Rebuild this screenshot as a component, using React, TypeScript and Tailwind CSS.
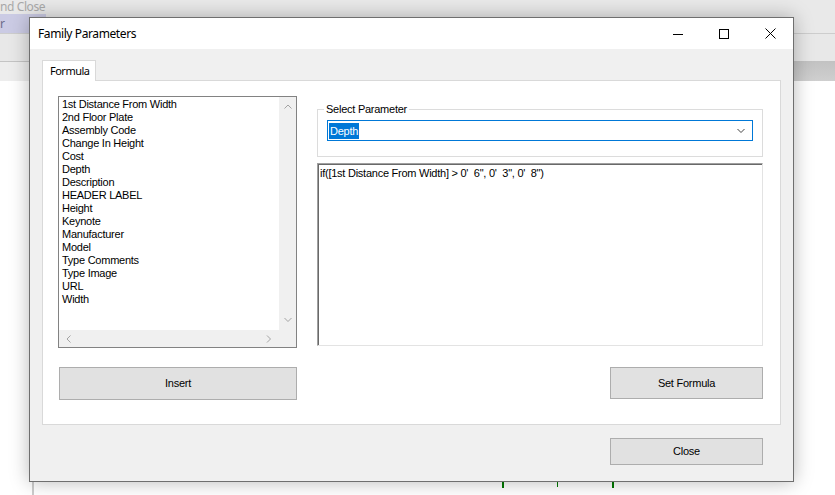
const items = [
  '1st Distance From Width',
  '2nd Floor Plate',
  'Assembly Code',
  'Change In Height',
  'Cost',
  'Depth',
  'Description',
  'HEADER LABEL',
  'Height',
  'Keynote',
  'Manufacturer',
  'Model',
  'Type Comments',
  'Type Image',
  'URL',
  'Width',
];

const ui = "font-['Noto_Sans',sans-serif] tracking-[-0.4px]";
const ms = "font-['Liberation_Sans',Arial,sans-serif] text-[11px] tracking-[-0.25px]";

function Chevron({ dir, className }: { dir: 'up' | 'down' | 'left' | 'right'; className?: string }) {
  const d = {
    up: 'M0.5 4.5 L4 1 L7.5 4.5',
    down: 'M0.5 1 L4 4.5 L7.5 1',
    left: 'M4.5 0.5 L1 4 L4.5 7.5',
    right: 'M1 0.5 L4.5 4 L1 7.5',
  }[dir];
  const vertical = dir === 'up' || dir === 'down';
  return (
    <svg
      width={vertical ? 8 : 6}
      height={vertical ? 6 : 8}
      viewBox={vertical ? '0 0 8 6' : '0 0 6 8'}
      className={className}
      fill="none"
      stroke="currentColor"
      strokeWidth="1"
    >
      <path d={d} />
    </svg>
  );
}

function WinButton({ label, className }: { label: string; className?: string }) {
  return (
    <button
      type="button"
      className={`${ms} flex items-center justify-center border border-[#adadad] bg-[#e1e1e1] text-black ${className ?? ''}`}
    >
      {label}
    </button>
  );
}

function TitleControls() {
  return (
    <div className="flex h-full">
      <div className="flex w-[46px] items-center justify-center">
        <svg width="10" height="10" viewBox="0 0 10 10">
          <path d="M0 5.5 H10" stroke="#000" strokeWidth="1" />
        </svg>
      </div>
      <div className="flex w-[46px] items-center justify-center">
        <svg width="10" height="10" viewBox="0 0 10 10">
          <rect x="0.5" y="0.5" width="9" height="9" fill="none" stroke="#000" strokeWidth="1" />
        </svg>
      </div>
      <div className="flex w-[46px] items-center justify-center">
        <svg width="11" height="11" viewBox="0 0 11 11">
          <path d="M0.5 0.5 L10.5 10.5 M10.5 0.5 L0.5 10.5" stroke="#000" strokeWidth="1" />
        </svg>
      </div>
    </div>
  );
}

function ParamList() {
  return (
    <div className="flex h-[252px] w-[239px] flex-col border border-[#828282] bg-white">
      <div className="flex min-h-0 flex-1">
        <ul className={`${ms} flex-1 pl-[3px] pt-[1px] leading-[13px] text-black`}>
          {items.map((it) => (
            <li key={it}>{it}</li>
          ))}
        </ul>
        <div className="flex w-[17px] flex-col items-center justify-between bg-[#f0f0f0] py-[7px] text-[#a3a3a3]">
          <Chevron dir="up" />
          <Chevron dir="down" />
        </div>
      </div>
      <div className="flex h-[17px] bg-[#f0f0f0] text-[#a3a3a3]">
        <div className="flex flex-1 items-center justify-between px-[7px]">
          <Chevron dir="left" />
          <Chevron dir="right" />
        </div>
        <div className="w-[17px]" />
      </div>
    </div>
  );
}

export default function App() {
  return (
    <div className={`relative h-[495px] w-[835px] overflow-hidden bg-white ${ui}`}>
      {/* application behind the dialog */}
      <div className="flex h-[14px] items-start bg-[#e9e9e9]">
        <span className="ml-0 mt-0 text-[12px] leading-[13px] text-[#a8a8a8]">nd Close</span>
      </div>
      <div className="flex h-[19px] bg-[#e9e9e9]">
        <div className="flex w-[46px] items-center bg-[#cbcbe4] pl-0 text-[12px] text-[#6b6b8a]">r</div>
      </div>
      <div className="h-[28px] border-t border-[#cdcdcd] bg-[#e8e8e8]" />
      <div className="flex h-[20px]">
        <div className="w-[33px] border-t border-[#c4c4c4] bg-[#ededed]" />
        <div className="flex-1 bg-gradient-to-b from-[#c2c2c2] to-[#cfcfcf]" />
      </div>
      <div className="flex h-[414px]">
        <div className="w-[32px]" />
        <div className="w-[2px] bg-[#cccccc]" />
        <div className="flex flex-1 flex-col justify-end">
          <div className="flex h-[14px] items-start">
            <div className="ml-[468px] h-[7px] w-[2px] bg-[#007800]" />
            <div className="ml-[53px] h-[6px] w-[1px] bg-[#007800]" />
            <div className="ml-[54px] h-[7px] w-[2px] bg-[#007800]" />
          </div>
        </div>
      </div>

      {/* dialog window */}
      <div className="absolute left-[29px] top-[17px] flex h-[465px] w-[765px] flex-col border border-[#6f6f6f] bg-[#f0f0f0] shadow-[0_0_18px_rgba(0,0,0,0.28)]">
        <div className="flex h-[31px] shrink-0 items-center justify-between bg-white">
          <span className="pl-[8px] text-[12px] text-black">Family Parameters</span>
          <TitleControls />
        </div>

        <div className="flex flex-1 flex-col px-[12px] pt-[11px]">
          <div className="relative z-10 mb-[-1px] flex h-[21px] w-[54px] items-center border border-b-0 border-[#d9d9d9] bg-white pl-[7px] text-[11px] tracking-[-0.5px] text-black">
            Formula
          </div>
          <div className="flex h-[345px] gap-[20px] border border-[#d9d9d9] bg-white pl-[15px] pt-[15px]">
            <div className="flex flex-col">
              <ParamList />
              <WinButton label="Insert" className="ml-[1px] mt-[19px] h-[33px] w-[238px]" />
            </div>

            <div className="flex w-[446px] flex-col">
              <fieldset className="mt-[7px] border border-[#dcdcdc] px-[9px] pb-[15px] pt-[4px]">
                <legend className={`${ms} ml-[-3px] px-[2px] leading-[13px] text-black`}>Select Parameter</legend>
                <div className="flex h-[21px] items-center justify-between border border-[#0078d7] bg-white pl-[1px] pr-[7px]">
                  <span className={`${ms} bg-[#0078d7] px-[1px] leading-[16px] text-white`}>Depth</span>
                  <Chevron dir="down" className="text-[#444]" />
                </div>
              </fieldset>
              <div
                className={`${ms} mt-[6px] h-[183px] border border-b-[#e3e3e3] border-l-[#a0a0a0] border-r-[#e3e3e3] border-t-[#a0a0a0] bg-white pl-[2px] pt-[3px] leading-[13px] text-black shadow-[inset_1px_1px_0_#696969]`}
              >
                if([1st Distance From Width] &gt; 0&apos;&nbsp; 6&quot;, 0&apos;&nbsp; 3&quot;, 0&apos;&nbsp; 8&quot;)
              </div>
              <div className="mt-[21px] flex justify-end">
                <WinButton label="Set Formula" className="h-[32px] w-[153px]" />
              </div>
            </div>
          </div>

          <div className="mt-[13px] flex justify-end pr-[18px]">
            <WinButton label="Close" className="h-[27px] w-[153px]" />
          </div>
        </div>
      </div>
    </div>
  );
}
